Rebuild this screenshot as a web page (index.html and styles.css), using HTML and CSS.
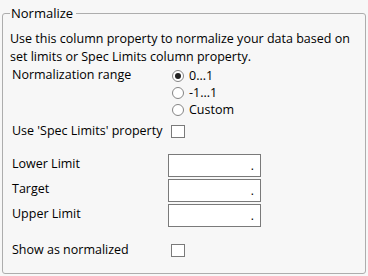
FILE: index.html
```html
<!DOCTYPE html>
<html lang="en">
<head>
    <meta charset="UTF-8">
    <title>Normalize</title>
    <link rel="stylesheet" href="styles.css">
</head>
<body>
    <fieldset class="group">
        <legend>Normalize</legend>
        <p class="intro">Use this column property to normalize your data based on set limits or Spec Limits column property.</p>

        <div class="form-grid">
            <span class="label">Normalization range</span>
            <div class="radio-list">
                <label class="radio-row"><input type="radio" name="range" checked> 0...1</label>
                <label class="radio-row"><input type="radio" name="range"> -1...1</label>
                <label class="radio-row"><input type="radio" name="range"> Custom</label>
            </div>

            <span class="label spec-label">Use 'Spec Limits' property</span>
            <div class="spec-check"><input type="checkbox" class="check"></div>
        </div>

        <div class="form-grid limits">
            <span class="label">Lower Limit</span>
            <div class="num-box"><span>.</span></div>
            <span class="label">Target</span>
            <div class="num-box"><span>.</span></div>
            <span class="label">Upper Limit</span>
            <div class="num-box"><span>.</span></div>
        </div>

        <div class="form-grid show-row">
            <span class="label">Show as normalized</span>
            <div><input type="checkbox" class="check"></div>
        </div>
    </fieldset>
</body>
</html>
```

FILE: styles.css
```css
html, body {
    height: 100%;
}

body {
    margin: 0;
    padding: 5px 2px 2px 2px;
    box-sizing: border-box;
    background-color: #f7f7f7;
    font-family: "Open Sans", "Noto Sans", sans-serif;
    font-size: 12.5px;
    color: #000;
    display: flex;
    flex-direction: column;
}

.group {
    flex: 1;
    margin: 0;
    padding: 9px 7px 0 7px;
    border: 1px solid #adadad;
    border-radius: 3px;
    min-width: 0;
}

.group legend {
    padding: 0 3px 0 1px;
    margin-left: 0;
    line-height: 16px;
    font-size: 13px;
}

.intro {
    margin: 0;
    line-height: 18px;
    font-size: 12.5px;
}

.form-grid {
    display: grid;
    grid-template-columns: 156px auto;
    padding-left: 2px;
    font-size: 12.5px;
}

.label {
    line-height: 18px;
    white-space: nowrap;
}

.radio-list {
    display: flex;
    flex-direction: column;
    padding-left: 4px;
    margin-top: 1px;
}

.radio-row {
    display: flex;
    align-items: center;
    gap: 5px;
    height: 17px;
}

.radio-row input {
    appearance: none;
    margin: 0;
    width: 12px;
    height: 12px;
    border: 1px solid #858585;
    border-radius: 50%;
    background-color: #fff;
    box-sizing: border-box;
    position: relative;
}

.radio-row input:checked::after {
    content: "";
    position: absolute;
    left: 2px;
    top: 2px;
    width: 6px;
    height: 6px;
    border-radius: 50%;
    background-color: #222;
}

.spec-label {
    margin-top: 4px;
}

.spec-check {
    margin-top: 4px;
    display: flex;
    align-items: center;
    height: 18px;
}

.check {
    appearance: none;
    margin: 0 0 0 3px;
    width: 14px;
    height: 13px;
    border: 1px solid #7a7a7a;
    background-color: #fff;
    box-sizing: border-box;
}

.limits {
    margin-top: 14px;
    row-gap: 2px;
}

.limits .label {
    line-height: 23px;
    margin-top: -2px;
}

.num-box {
    width: 93px;
    height: 23px;
    border: 1px solid #7a7a7a;
    background-color: #fff;
    box-sizing: border-box;
    display: flex;
    align-items: center;
    justify-content: flex-end;
    padding-right: 6px;
    font-size: 12px;
    line-height: 12px;
}

.show-row {
    margin-top: 14px;
}

.show-row div {
    display: flex;
    align-items: center;
    height: 18px;
}
```
